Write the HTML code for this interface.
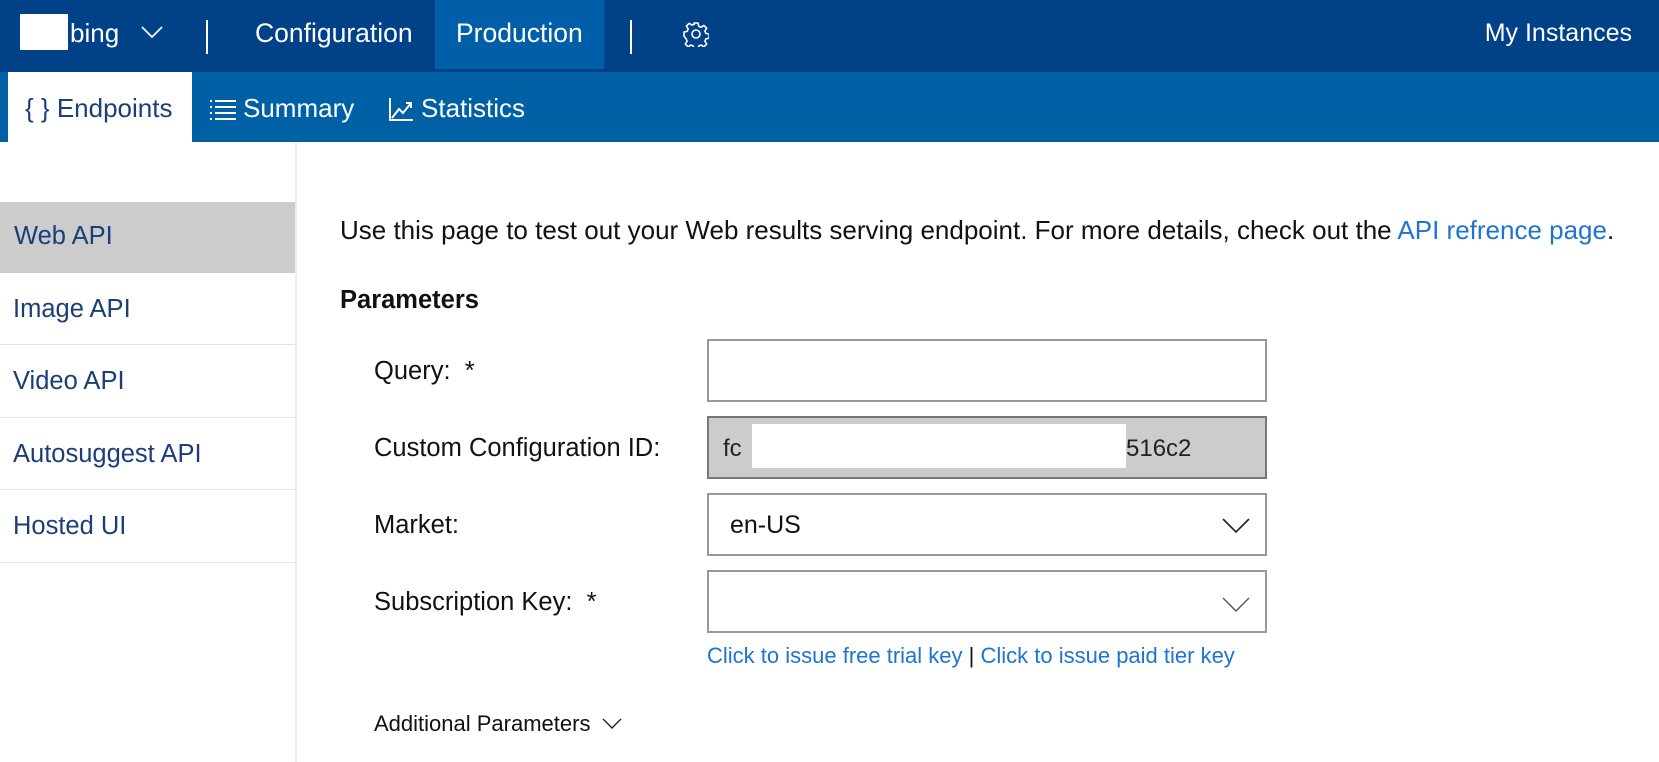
<!DOCTYPE html>
<html><head><style>
*{margin:0;padding:0;box-sizing:border-box}
body{width:1659px;height:762px;overflow:hidden;background:#fff;font-family:"Liberation Sans",sans-serif;position:relative}
.a{position:absolute;white-space:nowrap}
.top{left:0;top:0;width:1659px;height:72px;background:#004187}
.sub{left:0;top:72px;width:1659px;height:70px;background:#0060a6}
.w{color:#fff;font-size:26px}
.side{color:#1b3e78;font-size:25.5px;left:13px}
.row{left:0;width:295px;border-bottom:1px solid #e3e3e3}
.lab{color:#111;font-size:25.5px;left:374px}
.box{left:707px;width:560px;height:63px;border:2px solid #999;background:#fff}
.lnk{color:#1e74cf}
</style></head><body>
<div class="a top"></div>
<div class="a" style="left:435px;top:0;width:169px;height:69px;background:#005fa8"></div>
<div class="a" style="left:20px;top:14px;width:48px;height:36px;background:#fff"></div>
<div class="a w" style="left:70px;top:18px">bing</div>
<svg class="a" style="left:141px;top:25px" width="22" height="14"><path d="M1 2 L11 12 L21 2" stroke="#fff" stroke-width="1.8" fill="none"/></svg>
<div class="a" style="left:206px;top:20px;width:2px;height:34px;background:#fff"></div>
<div class="a w" style="left:255px;top:18px;font-size:26.5px">Configuration</div>
<div class="a w" style="left:456px;top:18px;font-size:26.5px">Production</div>
<div class="a" style="left:630px;top:20px;width:2px;height:34px;background:#fff"></div>
<svg class="a" style="left:683px;top:21px" width="26" height="26" viewBox="0 0 26 26"><path d="M11 2h4l.7 3.2 2.4 1 2.8-1.8 2.8 2.8-1.8 2.8 1 2.4 3.2.7v4l-3.2.7-1 2.4 1.8 2.8-2.8 2.8-2.8-1.8-2.4 1-.7 3.2h-4l-.7-3.2-2.4-1-2.8 1.8-2.8-2.8 1.8-2.8-1-2.4L1 15v-4l3.2-.7 1-2.4-1.8-2.8 2.8-2.8 2.8 1.8 2.4-1z" stroke="#fff" stroke-width="1.6" fill="none" stroke-linejoin="round"/><circle cx="13" cy="13" r="4" stroke="#fff" stroke-width="1.6" fill="none"/></svg>
<div class="a w" style="right:27px;top:19px;font-size:25px">My Instances</div>
<div class="a sub"></div>
<div class="a" style="left:8px;top:72px;width:184px;height:70px;background:#fff"></div>
<div class="a" style="left:25px;top:93px;font-size:26px;color:#1b3e78">{ } Endpoints</div>
<svg class="a" style="left:209px;top:99px" width="28" height="22"><path d="M1 2h2M1 8h2M1 14h2M1 20h2M6 2h21M6 8h21M6 14h21M6 20h21" stroke="#fff" stroke-width="2"/></svg>
<div class="a w" style="left:243px;top:93px">Summary</div>
<svg class="a" style="left:388px;top:97px" width="26" height="25"><path d="M2 1V23H25M4 21L11 12L15 16L23 6M18 6H23V11" stroke="#fff" stroke-width="2" fill="none"/></svg>
<div class="a w" style="left:421px;top:93px">Statistics</div>
<div class="a" style="left:295px;top:142px;width:2px;height:620px;background:#eee"></div>
<div class="a" style="left:0;top:202px;width:295px;height:71px;background:#cccccc"></div>
<div class="a row" style="top:273px;height:72px"></div>
<div class="a row" style="top:345px;height:73px"></div>
<div class="a row" style="top:418px;height:72px"></div>
<div class="a row" style="top:490px;height:73px"></div>
<div class="a side" style="left:14px;top:222px">Web API</div>
<div class="a side" style="top:295px">Image API</div>
<div class="a side" style="top:367px">Video API</div>
<div class="a side" style="top:440px">Autosuggest API</div>
<div class="a side" style="top:512px">Hosted UI</div>
<div class="a" style="left:340px;top:215px;font-size:26px;color:#111">Use this page to test out your Web results serving endpoint. For more details, check out the <span class="lnk">API refrence page</span>.</div>
<div class="a" style="left:340px;top:286px;font-size:25.5px;font-weight:bold;color:#111">Parameters</div>
<div class="a lab" style="top:357px">Query: &nbsp;*</div>
<div class="a lab" style="top:434px">Custom Configuration ID:</div>
<div class="a lab" style="top:511px">Market:</div>
<div class="a lab" style="top:588px">Subscription Key: &nbsp;*</div>
<div class="a box" style="top:339px"></div>
<div class="a box" style="top:416px;background:#cccccc;border-color:#777"></div>
<div class="a" style="left:723px;top:435px;font-size:24px;color:#222">fc</div>
<div class="a" style="left:752px;top:424px;width:374px;height:44px;background:#fff"></div>
<div class="a" style="left:1126px;top:435px;font-size:24px;color:#222">516c2</div>
<div class="a box" style="top:493px"></div>
<div class="a" style="left:730px;top:511px;font-size:25px;color:#111">en-US</div>
<svg class="a" style="left:1222px;top:518px" width="28" height="16"><path d="M1 1L14 14L27 1" stroke="#222" stroke-width="1.6" fill="none"/></svg>
<div class="a box" style="top:570px"></div>
<svg class="a" style="left:1222px;top:597px" width="28" height="16"><path d="M1 1L14 14L27 1" stroke="#555" stroke-width="1.4" fill="none"/></svg>
<div class="a" style="left:707px;top:643px;font-size:22px;color:#111"><span class="lnk">Click to issue free trial key</span> | <span class="lnk">Click to issue paid tier key</span></div>
<div class="a" style="left:374px;top:711px;font-size:22px;color:#111">Additional Parameters</div>
<svg class="a" style="left:602px;top:718px" width="20" height="12"><path d="M1 1L10 10L19 1" stroke="#222" stroke-width="1.4" fill="none"/></svg>
</body></html>
